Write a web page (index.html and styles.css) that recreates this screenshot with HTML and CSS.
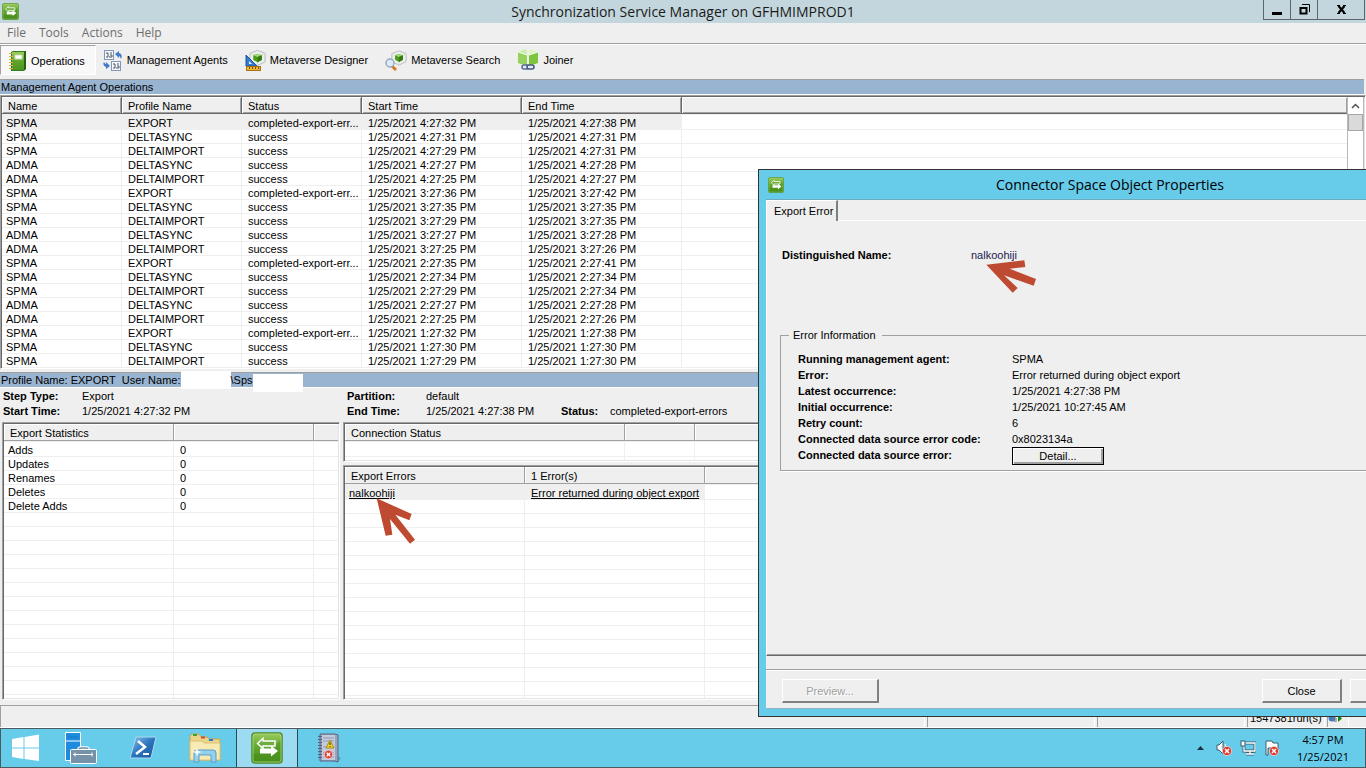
FILE: index.html
```html
<!DOCTYPE html>
<html lang="en">
<head>
  <meta charset="UTF-8">
  <meta name="viewport" content="width=device-width, initial-scale=1">

  <title>Synchronization Service Manager</title>

  <link rel="stylesheet" href="styles.css">
</head>
<body>

  <svg class="Sprite" width="0" height="0">
    <defs>
      <linearGradient id="green" x1="0" y1="0" x2="0" y2="1">
        <stop offset="0" stop-color="#9bcb5c"/>
        <stop offset="0.5" stop-color="#5fa52c"/>
        <stop offset="1" stop-color="#4d9320"/>
      </linearGradient>
      <linearGradient id="blue" x1="0" y1="0" x2="1" y2="1">
        <stop offset="0" stop-color="#8fc8ee"/>
        <stop offset="0.5" stop-color="#2b74bd"/>
        <stop offset="1" stop-color="#1c5497"/>
      </linearGradient>
      <symbol id="sync" viewBox="0 0 32 32">
        <rect x="1" y="1" width="30" height="30" rx="3" fill="url(#green)" stroke="#4a8a22" stroke-width="1.5"/>
        <rect x="2" y="2" width="28" height="28" rx="2" fill="none" stroke="#b4dc8b" stroke-width=".8"/>
        <path d="M2.500 22Q20 20 29.500 8V28Q29 29.500 27 29.500H5Q3 29.500 2.500 28Z" fill="#3f8417" opacity=".35"/>
        <path d="M6.500 11.500L12 6.500V9H24V14H12V16.500Z" fill="#6fae3c" stroke="#fff" stroke-width="1.500"/>
        <path d="M9 16.500H20V13.500L27 19L20 24.500V21.500H9Z" fill="#fff"/>
      </symbol>
      <symbol id="cube" viewBox="0 0 18 18">
        <path d="M9 1L17 4V13L9 17L1 13V4Z" fill="#eef0f0" stroke="#b4b8b8"/>
        <path d="M1 4L9 8L17 4M9 8V17" fill="none" stroke="#d3d6d6"/>
        <path d="M9 4.500L13.500 6V11L9 13.500L4.500 11V6Z" fill="#4d9d1c"/>
        <path d="M9 4.500L13.500 6L9 8L4.500 6Z" fill="#a4d977"/>
        <path d="M9 8L13.500 6V11L9 13.500Z" fill="#347a0e"/>
      </symbol>
      <symbol id="error-dot" viewBox="0 0 10 10">
        <circle cx="5" cy="5" r="4.600" fill="#dc3a31" stroke="#f5d5d2" stroke-width=".8"/>
        <path d="M3 3L7 7M7 3L3 7" stroke="#fff" stroke-width="1.500"/>
      </symbol>
    </defs>
  </svg>

  <main class="App">
    <header class="Titlebar">
      <svg class="Titlebar__icon" width="17" height="17"><use href="#sync"/></svg>
      <h1 class="Titlebar__text">Synchronization Service Manager on GFHMIMPROD1</h1>
      <div class="Titlebar__controls">
        <button class="Titlebar__button" aria-label="Minimize"><svg width="10" height="12"><path d="M0 8H10V11H0Z"/></svg></button>
        <button class="Titlebar__button" aria-label="Restore"><svg width="11" height="11"><path d="M3 .5H10.500V8" fill="none" stroke="#000"/><path d="M1.500 4H7.500V9.500H1.500Z" fill="none" stroke="#000" stroke-width="2"/></svg></button>
        <button class="Titlebar__button Titlebar__button--close" aria-label="Close"><svg width="9" height="9"><path d="M0 .5H3M6 .5H9M0 8.500H3M6 8.500H9" stroke="#000"/><path d="M1.500 1L7.500 8M7.500 1L1.500 8" stroke="#000" stroke-width="2.200"/></svg></button>
      </div>
    </header>

    <nav class="Menu">
      <a class="Menu__item" href="#">File</a>
      <a class="Menu__item" href="#">Tools</a>
      <a class="Menu__item" href="#">Actions</a>
      <a class="Menu__item" href="#">Help</a>
    </nav>

    <div class="Toolbar">
      <button class="Toolbar__button is-active">
        <svg width="18" height="22" viewBox="0 0 18 22">
          <path d="M2 2L4 1H17V19L15 21H2Z" fill="#2f7d1d"/>
          <path d="M3 2H15V20H3Z" fill="url(#green)"/>
          <path d="M15 2L17 1V19L15 20Z" fill="#24630f"/>
          <rect x="6" y="5" width="7" height="4" fill="#fff" stroke="#c8dfb9"/>
          <path d="M0 3.500H4M0 6.500H4M0 9.500H4M0 12.500H4M0 15.500H4M0 18.500H4" stroke="#d5b33e"/>
        </svg>
        Operations
      </button>
      <button class="Toolbar__button">
        <svg width="20" height="21" viewBox="0 0 20 21">
          <rect x="1.500" y=".5" width="9" height="9" fill="#f4f7fb" stroke="#8196b8"/>
          <rect x="8.500" y="11.500" width="9" height="9" fill="#f4f7fb" stroke="#8196b8"/>
          <path d="M3 3H5V7H3M7 3H9M7 5H9V7H6M10 14H12V18H10M14 14H16M14 16H16V18H13" fill="none" stroke="#4d5563"/>
          <path d="M12 4L16 1V3Q20 4 18 9Q17 6 16 6V8Z" fill="#4379c9"/>
          <path d="M7 16L3 19V17Q-1 15 1 12Q2 14 3 14V12Z" fill="#4379c9"/>
        </svg>
        Management Agents
      </button>
      <button class="Toolbar__button">
        <svg width="21" height="22" viewBox="0 0 21 22">
          <use href="#cube" x="4" y="0" width="17" height="18"/>
          <path d="M1 6V17H12Z" fill="#3579d1" stroke="#2055a0"/>
          <path d="M4 12V15H7Z" fill="#e5effb"/>
          <rect x="1.500" y="17.500" width="14" height="4" fill="#f2b436" stroke="#a86f13"/>
          <path d="M4.500 18V20M7.500 18V20M10.500 18V20M13.500 18V20" stroke="#7b4e08"/>
        </svg>
        Metaverse Designer
      </button>
      <button class="Toolbar__button">
        <svg width="22" height="22" viewBox="0 0 22 22">
          <use href="#cube" x="6" y="0" width="16" height="18"/>
          <path d="M7 17L11 21" stroke="#da7b24" stroke-width="3"/>
          <circle cx="5" cy="14" r="4" fill="#dcebfa" stroke="#98a9bb" stroke-width="1.500"/>
        </svg>
        Metaverse Search
      </button>
      <button class="Toolbar__button">
        <svg width="22" height="22" viewBox="0 0 22 22">
          <path d="M1 3L8 0L10 2V17L1 14Z" fill="#cdeeb0"/>
          <path d="M1 3L10 6V17L1 14Z" fill="#96d35e"/>
          <path d="M21 3L14 0L12 2V17L21 14Z" fill="#dcf4c6"/>
          <path d="M21 3L12 6V17L21 14Z" fill="#7cc53c"/>
          <path d="M1 3L10 6M21 3L12 6" stroke="#f2fbe9"/>
          <rect x="5" y="16" width="7" height="4" rx="2" fill="#e6ebf5" stroke="#5c6f97" stroke-width="1.600"/>
          <rect x="10" y="16" width="7" height="4" rx="2" fill="#e6ebf5" stroke="#445a87" stroke-width="1.600"/>
        </svg>
        Joiner
      </button>
    </div>

    <h2 class="Bar">Management Agent Operations</h2>

    <section class="Runs Panel">
      <table class="List Runs__list">
        <colgroup>
          <col class="w-120"><col class="w-120"><col class="w-120"><col class="w-160"><col class="w-160"><col>
        </colgroup>
        <thead>
          <tr><th>Name</th><th>Profile Name</th><th>Status</th><th>Start Time</th><th>End Time</th><th></th></tr>
        </thead>
        <tbody>
          <tr class="is-selected"><td>SPMA</td><td>EXPORT</td><td>completed-export-err...</td><td>1/25/2021 4:27:32 PM</td><td>1/25/2021 4:27:38 PM</td><td></td></tr>
          <tr><td>SPMA</td><td>DELTASYNC</td><td>success</td><td>1/25/2021 4:27:31 PM</td><td>1/25/2021 4:27:31 PM</td><td></td></tr>
          <tr><td>SPMA</td><td>DELTAIMPORT</td><td>success</td><td>1/25/2021 4:27:29 PM</td><td>1/25/2021 4:27:31 PM</td><td></td></tr>
          <tr><td>ADMA</td><td>DELTASYNC</td><td>success</td><td>1/25/2021 4:27:27 PM</td><td>1/25/2021 4:27:28 PM</td><td></td></tr>
          <tr><td>ADMA</td><td>DELTAIMPORT</td><td>success</td><td>1/25/2021 4:27:25 PM</td><td>1/25/2021 4:27:27 PM</td><td></td></tr>
          <tr><td>SPMA</td><td>EXPORT</td><td>completed-export-err...</td><td>1/25/2021 3:27:36 PM</td><td>1/25/2021 3:27:42 PM</td><td></td></tr>
          <tr><td>SPMA</td><td>DELTASYNC</td><td>success</td><td>1/25/2021 3:27:35 PM</td><td>1/25/2021 3:27:35 PM</td><td></td></tr>
          <tr><td>SPMA</td><td>DELTAIMPORT</td><td>success</td><td>1/25/2021 3:27:29 PM</td><td>1/25/2021 3:27:35 PM</td><td></td></tr>
          <tr><td>ADMA</td><td>DELTASYNC</td><td>success</td><td>1/25/2021 3:27:27 PM</td><td>1/25/2021 3:27:28 PM</td><td></td></tr>
          <tr><td>ADMA</td><td>DELTAIMPORT</td><td>success</td><td>1/25/2021 3:27:25 PM</td><td>1/25/2021 3:27:26 PM</td><td></td></tr>
          <tr><td>SPMA</td><td>EXPORT</td><td>completed-export-err...</td><td>1/25/2021 2:27:35 PM</td><td>1/25/2021 2:27:41 PM</td><td></td></tr>
          <tr><td>SPMA</td><td>DELTASYNC</td><td>success</td><td>1/25/2021 2:27:34 PM</td><td>1/25/2021 2:27:34 PM</td><td></td></tr>
          <tr><td>SPMA</td><td>DELTAIMPORT</td><td>success</td><td>1/25/2021 2:27:29 PM</td><td>1/25/2021 2:27:34 PM</td><td></td></tr>
          <tr><td>ADMA</td><td>DELTASYNC</td><td>success</td><td>1/25/2021 2:27:27 PM</td><td>1/25/2021 2:27:28 PM</td><td></td></tr>
          <tr><td>ADMA</td><td>DELTAIMPORT</td><td>success</td><td>1/25/2021 2:27:25 PM</td><td>1/25/2021 2:27:26 PM</td><td></td></tr>
          <tr><td>SPMA</td><td>EXPORT</td><td>completed-export-err...</td><td>1/25/2021 1:27:32 PM</td><td>1/25/2021 1:27:38 PM</td><td></td></tr>
          <tr><td>SPMA</td><td>DELTASYNC</td><td>success</td><td>1/25/2021 1:27:30 PM</td><td>1/25/2021 1:27:30 PM</td><td></td></tr>
          <tr><td>SPMA</td><td>DELTAIMPORT</td><td>success</td><td>1/25/2021 1:27:29 PM</td><td>1/25/2021 1:27:30 PM</td><td></td></tr>
        </tbody>
      </table>
      <div class="Scrollbar">
        <button class="Scrollbar__up" aria-label="Scroll up"><svg width="9" height="6"><path d="M1 5L4.500 1.500L8 5" fill="none" stroke="#505050" stroke-width="1.500"/></svg></button>
        <div class="Scrollbar__thumb"></div>
      </div>
    </section>

    <h2 class="Bar Bar--profile">
      <span class="Bar__label">Profile Name: EXPORT&nbsp; User Name:</span>
      <span class="Bar__blank"></span>
      <span class="Bar__user">\Sps</span>
      <span class="Bar__blank Bar__blank--low"></span>
    </h2>

    <dl class="Step">
      <dt>Step Type:</dt><dd>Export</dd>
      <dt>Partition:</dt><dd class="Step__wide">default</dd>
      <dt>Start Time:</dt><dd>1/25/2021 4:27:32 PM</dd>
      <dt>End Time:</dt><dd>1/25/2021 4:27:38 PM</dd>
      <dt>Status:</dt><dd>completed-export-errors</dd>
    </dl>

    <div class="Results">
      <section class="Results__stats Panel">
        <table class="List">
          <colgroup><col class="w-170"><col class="w-140"><col></colgroup>
          <thead>
            <tr><th>Export Statistics</th><th></th><th></th></tr>
          </thead>
          <tbody>
            <tr><td>Adds</td><td>0</td><td></td></tr>
            <tr><td>Updates</td><td>0</td><td></td></tr>
            <tr><td>Renames</td><td>0</td><td></td></tr>
            <tr><td>Deletes</td><td>0</td><td></td></tr>
            <tr><td>Delete Adds</td><td>0</td><td></td></tr>
            <tr class="List__filler"><td></td><td></td><td></td></tr>
          </tbody>
        </table>
      </section>

      <div class="Results__side">
        <section class="Results__status Panel">
          <table class="List">
            <colgroup><col class="w-280"><col class="w-70"><col></colgroup>
            <thead>
              <tr><th>Connection Status</th><th></th><th></th></tr>
            </thead>
            <tbody>
              <tr><td></td><td></td><td></td></tr>
              <tr class="List__filler"><td></td><td></td><td></td></tr>
            </tbody>
          </table>
        </section>
        <section class="Results__errors Panel">
          <table class="List">
            <colgroup><col class="w-180"><col class="w-180"><col></colgroup>
            <thead>
              <tr><th>Export Errors</th><th>1 Error(s)</th><th></th></tr>
            </thead>
            <tbody>
              <tr class="is-selected"><td><a href="#">nalkoohiji</a></td><td><a href="#">Error returned during object export</a></td><td></td></tr>
              <tr class="List__filler"><td></td><td></td><td></td></tr>
            </tbody>
          </table>
          <svg class="Arrow Arrow--error" width="40" height="46" viewBox="138 414 120 138">
            <path d="M140 415L245 462L238 481L196 464L255 539L240 551L180 477L187 524L167 527Z"/>
          </svg>
        </section>
      </div>
    </div>

    <footer class="Status">
      <div class="Status__cell"></div>
      <div class="Status__cell Status__cell--wide"></div>
      <div class="Status__cell Status__cell--medium"></div>
      <div class="Status__cell Status__cell--runs">1547381run(s)</div>
      <div class="Status__cell Status__cell--icon">
        <svg width="15" height="14" viewBox="0 0 15 14"><circle cx="4" cy="8" r="3.500" fill="#3c7dc4"/><path d="M2 4L7 12M8 8V12" stroke="#777"/><path d="M10 5L14 8.500L10 12Z" fill="#118a11"/></svg>
      </div>
    </footer>
  </main>

  <section class="Dialog">
    <header class="Dialog__title">
      <svg width="16" height="16"><use href="#sync"/></svg>
      <h2 class="Dialog__text">Connector Space Object Properties</h2>
    </header>
    <div class="Dialog__body">
      <div class="Dialog__tabs">
        <button class="Dialog__tab">Export Error</button>
      </div>
      <div class="Dialog__page">
        <dl class="Entry">
          <dt>Distinguished Name:</dt>
          <dd>nalkoohiji</dd>
        </dl>
        <svg class="Arrow Arrow--name" width="50" height="33" viewBox="708 286 150 99">
          <path d="M709 300L823 287L826 307L779 312L858 343L851 363L762 332L803 370L788 384Z"/>
        </svg>
        <fieldset class="Group">
          <legend>Error Information</legend>
          <dl class="Group__list">
            <dt>Running management agent:</dt><dd>SPMA</dd>
            <dt>Error:</dt><dd>Error returned during object export</dd>
            <dt>Latest occurrence:</dt><dd>1/25/2021 4:27:38 PM</dd>
            <dt>Initial occurrence:</dt><dd>1/25/2021 10:27:45 AM</dd>
            <dt>Retry count:</dt><dd>6</dd>
            <dt>Connected data source error code:</dt><dd>0x8023134a</dd>
            <dt>Connected data source error:</dt><dd><button class="Button Button--default">Detail...</button></dd>
          </dl>
        </fieldset>
      </div>
      <div class="Dialog__footer">
        <button class="Button Button--preview" disabled>Preview...</button>
        <button class="Button">Close</button>
        <button class="Button" aria-label="Help"></button>
      </div>
    </div>
  </section>

  <footer class="Taskbar">
    <button class="Taskbar__item" aria-label="Start">
      <svg width="28" height="28" viewBox="0 0 28 28"><path d="M0 5L11.500 3V13.500H0ZM12.500 3L27 .5V13.500H12.500ZM0 14.500H11.500V25L0 23ZM12.500 14.500H27V27L12.500 25Z" fill="#fff"/></svg>
    </button>
    <button class="Taskbar__item" aria-label="Server Manager">
      <svg width="32" height="32" viewBox="0 0 32 32">
        <path d="M.5.500H15.500V28.500H.5Z" fill="#1f8bdc" stroke="#fff"/>
        <path d="M0 9H16" stroke="#fff"/><path d="M3 5H13" stroke="#1878c4"/>
        <path d="M14 18V17Q14 16 16 16H21Q23 16 23 17V18" fill="none" stroke="#fff" stroke-width="3.500"/>
        <path d="M14 18V17Q14 16 16 16H21Q23 16 23 17V18" fill="none" stroke="#6e8ba3" stroke-width="1.500"/>
        <rect x="5.500" y="17.500" width="26" height="14" rx="1" fill="#7592a8" stroke="#fff"/>
        <path d="M8 22.500H28M10 20.500V24.500M27 20.500V24.500" stroke="#fff"/>
      </svg>
    </button>
    <button class="Taskbar__item" aria-label="PowerShell">
      <svg width="28" height="24" viewBox="0 0 28 24">
        <path d="M7 1H27L22 22H1Z" fill="url(#blue)" stroke="#a9d9f3"/>
        <path d="M9 5L16 11L7 18" fill="none" stroke="#fff" stroke-width="2.500"/><path d="M14 18H20" stroke="#fff" stroke-width="2"/>
      </svg>
    </button>
    <button class="Taskbar__item" aria-label="File Explorer">
      <svg width="32" height="30" viewBox="0 0 32 30">
        <path d="M1 3L3 1H10L12 4H18L20 6H31V27H1Z" fill="#edd48b" stroke="#c6a44e"/>
        <path d="M4 2H8" stroke="#2da63d" stroke-width="2"/><path d="M12 4.500H16" stroke="#d14c2c" stroke-width="2"/>
        <path d="M1 8H13L15 10H31V27H1Z" fill="#f8eab3" stroke="#dcc277"/>
        <path d="M20 7H24" stroke="#2f78cc" stroke-width="2"/>
        <path d="M5 29V20Q5 17 8 17H24Q27 17 27 20V29H22V22H10V29Z" fill="#92d0ee" stroke="#5b9fc6"/>
        <path d="M8 14L9 18L13 19L9 20L8 24L7 20L3 19L7 18Z" fill="#fff"/>
      </svg>
    </button>
    <button class="Taskbar__item is-active" aria-label="Synchronization Service Manager">
      <svg width="32" height="32"><use href="#sync"/></svg>
    </button>
    <button class="Taskbar__item" aria-label="Event log">
      <svg width="24" height="30" viewBox="0 0 24 30">
        <path d="M20 23L24 25L21 29H16Z" fill="#3e8fae" opacity=".6"/>
        <path d="M3 1H18L21 2V29L18 28H3Z" fill="#9aa5bd" stroke="#5b6583"/>
        <path d="M5 2H18V27H5Z" fill="#c3cadb"/>
        <path d="M6 5H17M6 8H17M6 14H17M6 20H17M6 24H17" stroke="#8f9bb8"/>
        <path d="M1 3.500H5M1 6.500H5M1 9.500H5M1 12.500H5M1 15.500H5M1 18.500H5M1 21.500H5M1 24.500H5" stroke="#596079"/>
        <path d="M13 7L17 15H9Z" fill="#f6d42b" stroke="#a98e13"/><path d="M13 9.500V12M13 13V14" stroke="#222"/>
        <use href="#error-dot" x="7" y="17" width="9" height="9"/>
      </svg>
    </button>
    <div class="Tray">
      <svg class="Tray__more" width="7" height="4"><path d="M0 4L3.500 0L7 4Z" fill="#16303a"/></svg>
      <svg width="16" height="16" viewBox="0 0 16 16"><path d="M1 5H3L7 1V14L3 10H1Z" fill="#fff" stroke="#3b5f6d"/><path d="M9 4Q11 7 9 11" fill="none" stroke="#fff"/><use href="#error-dot" x="6" y="6" width="10" height="10"/></svg>
      <svg width="16" height="16" viewBox="0 0 16 16" fill="none"><path d="M6 3H15V11H4V7M10 11V14M6 14H14" stroke="#35606f" stroke-width="3"/><path d="M6 3H15V11H4V7M10 11V14M6 14H14" stroke="#fff" stroke-width="1.300"/><rect x="1" y="1" width="4" height="5" fill="#fff" stroke="#35606f"/></svg>
      <svg width="16" height="16" viewBox="0 0 16 16"><path d="M2 15V1H8L9 3H14V10H8L7 8H4V15Z" fill="#fff" stroke="#3b5f6d"/><use href="#error-dot" x="5" y="6" width="10" height="10"/></svg>
      <div class="Tray__clock"><span>4:57 PM</span><span>1/25/2021</span></div>
    </div>
  </footer>

</body>
</html>
```

FILE: styles.css
```css
*,
*::before,
*::after {
  box-sizing: border-box;
}
html, body {
  height: 100%;
  margin: 0;
  padding: 0;
  overflow: hidden;
}
body {
  position: relative;
  display: flex;
  flex-direction: column;
  background-color: #efefef;
  color: #000;
  font: 11px/14px "Liberation Sans", Arial, sans-serif;
}
h1, h2, dl, dd {
  margin: 0;
  font-size: inherit;
  font-weight: normal;
}
dt {
  font-weight: bold;
}
a {
  color: inherit;
}
button {
  margin: 0;
  padding: 0;
  border: 0;
  background: none;
  color: inherit;
  font: inherit;
}
svg {
  display: block;
  flex: none;
}

.Sprite {
  position: absolute;
}
.App {
  display: flex;
  flex: 1;
  flex-direction: column;
  min-height: 0;
}

/* Title bar */
.Titlebar {
  display: grid;
  grid-template-columns: 103px 1fr 103px;
  align-items: center;
  height: 23px;
  background-color: #c3d6dd;
}
.Titlebar__icon {
  margin-left: 2px;
}
.Titlebar__text {
  color: #1a1a1a;
  font: 14px/22px "Open Sans", sans-serif;
  text-align: center;
  white-space: nowrap;
}
.Titlebar__controls {
  display: flex;
  align-self: start;
  height: 20px;
  width: 102px;
  border: 1px solid #5b656e;
  border-top: 0;
}
.Titlebar__button {
  display: flex;
  flex: 0 0 27px;
  align-items: center;
  justify-content: center;
  border-right: 1px solid #5b656e;
}
.Titlebar__button--close {
  flex: 1;
  border-right: 0;
}

/* Menu and toolbar */
.Menu {
  display: flex;
  gap: 13px;
  height: 22px;
  padding-left: 7px;
  border-bottom: 1px solid #fff;
  box-shadow: inset 0 -1px #a0a0a0;
}
.Menu__item {
  color: #6d6d6d;
  font: 12px/20px "Open Sans", sans-serif;
  text-decoration: none;
}
.Toolbar {
  display: flex;
  gap: 17px;
  height: 34px;
  padding-bottom: 4px;
}
.Toolbar__button {
  display: flex;
  gap: 4px;
  align-items: center;
}
.Toolbar__button.is-active {
  margin-right: -10px;
  padding: 2px 10px 0 8px;
  border: 1px solid #fff;
  border-top-color: #a0a0a0;
  border-left-color: #a0a0a0;
  background-color: #f8f8f8;
}

.Bar {
  flex: none;
  height: 16px;
  margin-right: 2px;
  padding-left: 1px;
  border-top: 1px solid #a0a0a0;
  border-bottom: 1px solid #fff;
  background-color: #99b4d1;
}
.Bar--profile {
  display: flex;
}
.Bar__label {
  white-space: nowrap;
}
.Bar__blank {
  width: 50px;
  height: 18px;
  margin-top: -2px;
  background-color: #fff;
}
.Bar__blank--low {
  margin-top: 1px;
}

/* Sunken list views */
.Panel {
  border: 1px solid #fff;
  border-top-color: #a0a0a0;
  border-left-color: #a0a0a0;
  background-color: #fff;
  box-shadow: inset 1px 1px #696969, inset -1px -1px #e3e3e3;
  padding: 1px;
}
.List {
  width: 100%;
  height: 100%;
  border-spacing: 0;
  table-layout: fixed;
}
.List th {
  height: 17px;
  padding: 2px 6px 0;
  border-right: 1px solid #a0a0a0;
  border-bottom: 1px solid #a0a0a0;
  background-color: #efefef;
  box-shadow: inset 1px 1px #fff;
  font-weight: normal;
  text-align: left;
}
.List th:last-child,
.List td:last-child {
  border-right: 0;
}
.List td {
  height: 14px;
  padding: 2px 6px 0;
  border-right: 1px solid #efefef;
  border-bottom: 1px solid #efefef;
  line-height: 11px;
  white-space: nowrap;
}
.List td:first-child {
  padding-left: 4px;
}
.List tbody tr:first-child td {
  height: 16px;
  padding-top: 3px;
  border-top: 1px solid #efefef;
}
.List .is-selected td:not(:last-child) {
  background-color: #efefef;
}
.List .List__filler td {
  height: auto;
  padding: 0;
  border-bottom: 0;
  background: repeating-linear-gradient(#fff 0 13px, #efefef 13px 14px);
}
.w-70 { width: 70px; }
.w-120 { width: 120px; }
.w-140 { width: 140px; }
.w-160 { width: 160px; }
.w-170 { width: 170px; }
.w-180 { width: 180px; }
.w-280 { width: 280px; }

.Runs {
  display: flex;
  flex: none;
  margin-bottom: 3px;
  padding-bottom: 0;
}
.Runs__list {
  flex: 1;
  height: auto;
}
.Runs__list th {
  border-color: #696969;
  box-shadow: inset 1px 1px #fff, inset -1px -1px #a0a0a0;
}
.Scrollbar {
  width: 17px;
  border: 1px solid #b8b8b8;
  border-top: 0;
}
.Scrollbar__up {
  display: flex;
  align-items: center;
  justify-content: center;
  width: 100%;
  height: 17px;
}
.Scrollbar__thumb {
  height: 17px;
  border: 1px solid #a6a6a6;
  background-color: #dadada;
}

/* Selected run */
.Step {
  display: grid;
  grid-template-columns: 79px 265px 79px 135px 49px 1fr;
  grid-auto-rows: 15px;
  padding: 1px 0 3px 3px;
  line-height: 15px;
}
.Step__wide {
  grid-column: span 3;
}
.Results {
  display: flex;
  flex: 1;
  gap: 3px;
  min-height: 0;
  margin: 0 2px 5px;
}
.Results__stats {
  flex: 0 0 338px;
}
.Results__side {
  display: flex;
  flex: 1;
  flex-direction: column;
  gap: 3px;
}
.Results__status {
  flex: 0 0 40px;
  overflow: hidden;
}
.Results__errors {
  position: relative;
  flex: 1;
}

.Arrow {
  position: absolute;
  fill: #be4a31;
}
.Arrow--error {
  top: 32px;
  left: 32px;
}
.Arrow--name {
  top: 39px;
  left: 219px;
}

.Status {
  display: flex;
  flex: none;
  gap: 2px;
  height: 23px;
  padding-right: 17px;
  border-bottom: 1px solid #fff;
}
.Status__cell {
  flex: 1;
  border: 1px solid #fff;
  border-top-color: #a0a0a0;
  border-left-color: #a0a0a0;
  border-bottom: 0;
}
.Status__cell--wide {
  flex: 0 0 168px;
}
.Status__cell--medium {
  flex: 0 0 148px;
}
.Status__cell--runs {
  flex: 0 0 78px;
  padding: 5px 2px 0;
}
.Status__cell--icon {
  flex: 0 0 22px;
  padding-top: 4px;
}

/* Properties window, runs off the right side of the desktop */
.Dialog {
  position: absolute;
  top: 169px;
  left: 758px;
  width: 702px;
  padding: 0 7px 7px;
  border: 1px solid #333;
  background-color: #67cbea;
}
.Dialog__title {
  display: grid;
  grid-template-columns: 24px 1fr 24px;
  align-items: center;
  height: 29px;
  padding-left: 2px;
}
.Dialog__text {
  font: 14px/28px "Open Sans", sans-serif;
  text-align: center;
}
.Dialog__body {
  border-top: 1px solid #6fa9bd;
  border-bottom: 1px solid #8fb3bf;
  background-color: #efefef;
}
.Dialog__tabs {
  display: flex;
  height: 21px;
  box-shadow: inset 0 -1px #fff;
}
.Dialog__tab {
  padding: 0 3px 0 7px;
  border: 1px solid #fff;
  border-right: 2px solid #808080;
  border-bottom: 0;
  background-color: #efefef;
}
.Dialog__page {
  position: relative;
  height: 435px;
  padding: 27px 13px 0;
  border-left: 1px solid #fff;
  border-bottom: 1px solid #696969;
  box-shadow: inset 0 -1px #a0a0a0;
}
.Entry {
  display: grid;
  grid-template-columns: 189px 1fr;
  padding-left: 2px;
}
.Entry dd {
  color: #1b1b50;
}
.Group {
  height: 143px;
  margin: 66px 0 0;
  padding: 9px 17px;
  border: 1px solid #a0a0a0;
  box-shadow: 1px 1px #fff;
}
.Group legend {
  margin-left: -9px;
  padding: 0 6px 0 4px;
  background-color: #efefef;
}
.Group__list {
  display: grid;
  grid-template-columns: 214px 1fr;
  grid-auto-rows: 16px;
  line-height: 16px;
}
.Dialog__footer {
  display: flex;
  gap: 8px;
  height: 39px;
  margin-top: 13px;
  padding: 9px 22px 0 16px;
  border-top: 1px solid #a0a0a0;
  box-shadow: inset 0 1px #fff;
}

.Button {
  width: 80px;
  height: 24px;
  border: 1px solid #fff;
  border-right: 2px solid #808080;
  border-bottom: 2px solid #808080;
  background-color: #efefef;
}
.Button:disabled {
  color: #a0a0a0;
  text-shadow: 1px 1px #fff;
}
.Button--preview {
  width: 97px;
  margin-right: auto;
}
.Button--default {
  width: 92px;
  height: 18px;
  border: 1px solid #000;
  box-shadow: inset 1px 1px #fff, inset -2px -2px #a0a0a0;
  line-height: 14px;
}

/* Taskbar */
.Taskbar {
  display: flex;
  flex: none;
  height: 40px;
  border: 1px solid #4c5a60;
  background-color: #67cbea;
}
.Taskbar__item {
  display: flex;
  flex: 0 0 62px;
  align-items: center;
  justify-content: center;
}
.Taskbar__item:first-child {
  flex-basis: 49px;
}
.Taskbar__item.is-active {
  border: 1px solid #2c4a55;
  border-width: 0 1px;
  background-color: #9cdbf1;
}
.Tray {
  display: flex;
  gap: 8px;
  align-items: center;
  margin-left: auto;
  padding-right: 15px;
}
.Tray__more {
  margin-right: 4px;
}
.Tray__clock {
  display: flex;
  flex-direction: column;
  width: 54px;
  margin-left: 8px;
  font: 11px/17px "Open Sans", sans-serif;
  text-align: center;
}
```
